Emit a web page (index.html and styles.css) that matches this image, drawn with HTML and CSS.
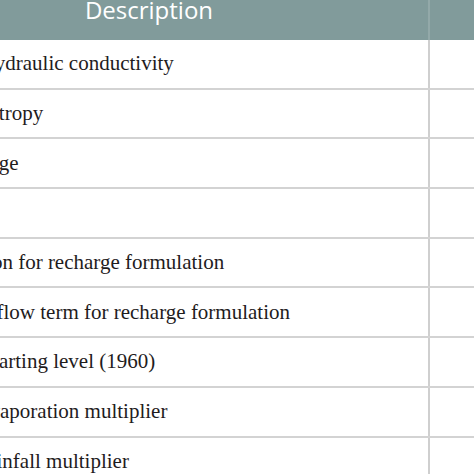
FILE: index.html
```html
<!DOCTYPE html>
<html lang="en">
<head>
<meta charset="utf-8">
<link rel="stylesheet" href="styles.css">
<title>Parameters</title>
</head>
<body>
<div class="table">
  <div class="row head">
    <div class="cell desc"><span class="htext">Description</span></div>
    <div class="cell side"></div>
  </div>
  <div class="row">
    <div class="cell desc">Mean layer hydraulic conductivity</div>
    <div class="cell side"></div>
  </div>
  <div class="row">
    <div class="cell desc">Vertical anisotropy</div>
    <div class="cell side"></div>
  </div>
  <div class="row">
    <div class="cell desc">Specific storage</div>
    <div class="cell side"></div>
  </div>
  <div class="row">
    <div class="cell desc">Porosity</div>
    <div class="cell side"></div>
  </div>
  <div class="row">
    <div class="cell desc">Power function for recharge formulation</div>
    <div class="cell side"></div>
  </div>
  <div class="row">
    <div class="cell desc">Seepage overflow term for recharge formulation</div>
    <div class="cell side"></div>
  </div>
  <div class="row">
    <div class="cell desc">Water table starting level (1960)</div>
    <div class="cell side"></div>
  </div>
  <div class="row">
    <div class="cell desc">Free-water evaporation multiplier</div>
    <div class="cell side"></div>
  </div>
  <div class="row">
    <div class="cell desc">Catchment rainfall multiplier</div>
    <div class="cell side"></div>
  </div>
</div>
</body>
</html>
```

FILE: styles.css
```css
html, body {
  margin: 0;
  padding: 0;
  background: #ffffff;
  overflow: hidden;
}

.table {
  margin-left: -130px;
  width: 700px;
  display: flex;
  flex-direction: column;
}

.row {
  display: grid;
  grid-template-columns: 558px 1fr;
  height: 49.7px;
  box-sizing: border-box;
  border-bottom: 2px solid #d3d3d3;
}

.row.head {
  height: 40px;
  background: #819b9b;
  border-bottom: none;
}

.cell {
  display: flex;
  align-items: center;
  white-space: nowrap;
}

.desc {
  padding-left: 14px;
  font-family: "Liberation Serif", "Times New Roman", serif;
  font-size: 21px;
  color: #1f1c1d;
}

.side {
  border-left: 2px solid #cfcfcf;
}

.head .desc {
  padding-left: 0;
  justify-content: center;
  align-items: flex-start;
}

.head .side {
  border-left: 2px solid #93a9a9;
}

.htext {
  font-family: "Open Sans", "Liberation Sans", sans-serif;
  font-size: 24px;
  line-height: 24px;
  margin-top: -2px;
  color: #ffffff;
}
```
